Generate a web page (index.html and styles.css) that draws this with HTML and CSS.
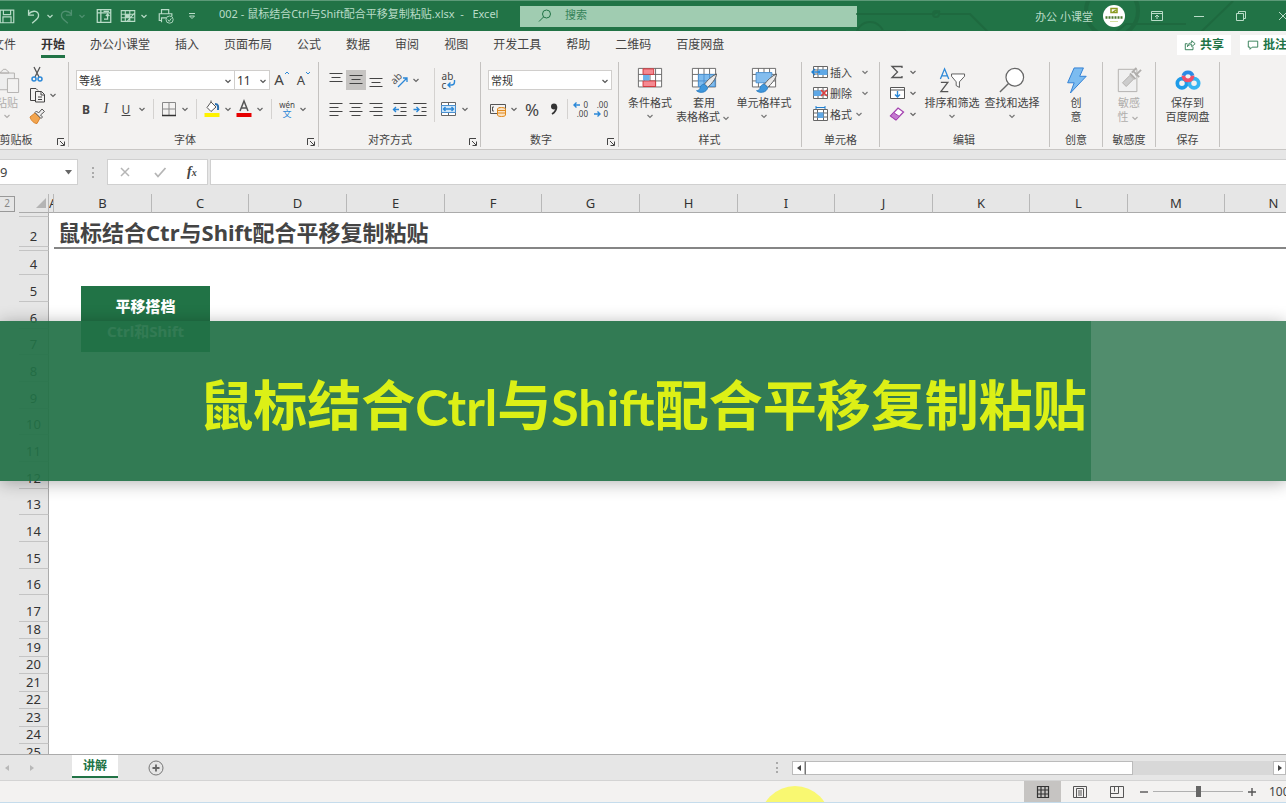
FILE: index.html
```html
<!DOCTYPE html>
<html lang="zh-CN">
<head>
    <meta charset="UTF-8">
    <meta name="viewport" content="width=device-width, initial-scale=1.0">
    <title>002 - 鼠标结合Ctrl与Shift配合平移复制粘贴.xlsx - Excel</title>
    <link rel="stylesheet" href="styles.css">
</head>
<body>
    <!-- icon sprite -->
    <svg class="sprite" aria-hidden="true">
        <symbol id="chev" viewBox="0 0 12 12"><path d="M3.500 5l2.500 2.500L8.500 5" fill="none" stroke="currentColor" stroke-width="1.200"/></symbol>
        <symbol id="launch" viewBox="0 0 10 10"><path d="M1.500 8V1.500H8M4 4l4 4M8.500 4.500v4h-4" fill="none" stroke="currentColor"/></symbol>
        <symbol id="al" viewBox="0 0 20 20"><path d="M3.500 4.500h13M3.500 8.500h9M3.500 12.500h13M3.500 16.500h9" stroke="currentColor"/></symbol>
        <symbol id="ac" viewBox="0 0 20 20"><path d="M3.500 4.500h13M5.500 8.500h9M3.500 12.500h13M5.500 16.500h9" stroke="currentColor"/></symbol>
        <symbol id="ar" viewBox="0 0 20 20"><path d="M3.500 4.500h13M7.500 8.500h9M3.500 12.500h13M7.500 16.500h9" stroke="currentColor"/></symbol>
        <symbol id="grid-ic" viewBox="0 0 28 26"><path d="M1.500 1.500h25v20h-25zM1.500 8h25M1.500 15h25M8 1.500v20M14 1.500v20M20 1.500v20" fill="#fff" stroke="#666"/></symbol>
        <symbol id="brush" viewBox="0 0 28 28"><path d="M27.500 7.500c-5 2-10 7-13 11l3.500 3.500c4-4 9-9 9.500-14.500z" fill="#e8e8e8" stroke="#555"/><path d="M14.500 18.500c-3 0-4.500 2-5 5-1 1.500-2 2-3.500 2 3 3 11 2.500 12-3.500z" fill="#3f97dc" stroke="#2b7cc0"/></symbol>
    </svg>

    <header class="titlebar">
        <svg class="circuit" viewBox="0 0 430 31" fill="none" stroke="#1d663d" stroke-width="2" aria-hidden="true">
            <path d="M0 13h78l6-3M84 13h30l20 20M260 31l10-8h60M345 31l32-31M0 30h50"/>
            <circle cx="14" cy="35" r="14"/><circle cx="256" cy="10" r="26" stroke-width="4"/><circle cx="80" cy="13" r="3"/>
        </svg>
        <div class="quick">
            <button class="tool" aria-label="保存"><svg viewBox="0 0 20 20"><path d="M2.500 3.500h15v14h-15zM6 3.500v5h8v-5M5.500 17v-6h9v6" fill="none" stroke="currentColor" stroke-width="1.300"/></svg></button>
            <button class="tool undo" aria-label="撤消"><svg viewBox="0 0 20 20"><path d="M4 3v6h6M4 8c4-5 12-4 11 2 0 3-4 5-7 8" fill="none" stroke="currentColor" stroke-width="1.500"/></svg></button>
            <button class="drop" aria-label="撤消选项"><svg><use href="#chev"/></svg></button>
            <button class="tool redo dim" aria-label="恢复"><svg viewBox="0 0 20 20"><path d="M16 3v6h-6M16 8C12 3 4 4 5 10c0 3 4 5 7 8" fill="none" stroke="currentColor" stroke-width="1.500"/></svg></button>
            <button class="drop dim" aria-label="恢复选项"><svg><use href="#chev"/></svg></button>
            <button class="tool pivot" aria-label="数据透视表"><svg viewBox="0 0 20 20"><path d="M2.500 3h15v14h-15zM2.500 6.500h15M6.500 3v14M10 13.500h4v-5M12 10l2-2 2 2M9.500 4.800h6" fill="none" stroke="currentColor" stroke-width="1.400"/></svg></button>
            <button class="tool" aria-label="样式"><svg viewBox="0 0 20 20"><path d="M2.500 4h15v12h-15zM2.500 8h14M2.500 12h14M7 4v12M12 4v12M18 6l-9 10" fill="none" stroke="currentColor" stroke-width="1.200"/><path d="M7 8h5v4H7z" fill="currentColor"/></svg></button>
            <button class="drop" aria-label="样式选项"><svg><use href="#chev"/></svg></button>
            <button class="tool print" aria-label="打印预览"><svg viewBox="0 0 20 20"><path d="M5 7V3h8v4M5 15H2.500V7.500h14V10M5 17v-5h5" fill="none" stroke="currentColor" stroke-width="1.300"/><circle cx="14" cy="14" r="4" fill="none" stroke="currentColor"/><path d="M12 14l1.500 2L16 12.500" fill="none" stroke="currentColor"/></svg></button>
            <button class="drop more" aria-label="自定义"><svg viewBox="0 0 12 12"><path d="M3 3.500h6M3.500 6L6 8.500 8.500 6z" fill="none" stroke="currentColor"/></svg></button>
        </div>
        <div class="doc-name">002 - 鼠标结合Ctrl与Shift配合平移复制粘贴.xlsx &nbsp;- &nbsp;&nbsp;Excel</div>
        <label class="search">
            <svg viewBox="0 0 16 16"><circle cx="9.500" cy="6" r="4" fill="none" stroke="currentColor"/><path d="M6.500 9L2 13.500" stroke="currentColor"/></svg>
            <input type="text" placeholder="搜索" aria-label="搜索">
        </label>
        <div class="account">
            <span>办公 小课堂</span>
            <svg class="avatar" viewBox="0 0 22 22"><circle cx="11" cy="11" r="11" fill="#fff"/><path d="M8 3.500h6v4H8zM10 7l3-2" fill="none" stroke="#8a9a20" stroke-width="1.500"/><path d="M2.500 12.500h17" stroke="#4c7a2c" stroke-width="2.500" stroke-dasharray="2 1"/><path d="M7 16.500h8" stroke="#d5dfa0"/></svg>
        </div>
        <div class="window-buttons">
            <button aria-label="功能区显示选项"><svg viewBox="0 0 14 14"><path d="M1.500 2.500h11v9h-11zM1.500 4.500h11M7 10V6M5 8l2-2 2 2" fill="none" stroke="currentColor"/></svg></button>
            <button aria-label="最小化"><svg viewBox="0 0 14 14"><path d="M2 7.500h10" stroke="currentColor"/></svg></button>
            <button aria-label="还原"><svg viewBox="0 0 14 14"><path d="M2.500 4.500h7v7h-7zM4.500 4.500v-2h7v7h-2" fill="none" stroke="currentColor"/></svg></button>
            <button aria-label="关闭"><svg viewBox="0 0 14 14"><path d="M3 3l8 8M11 3l-8 8" stroke="currentColor"/></svg></button>
        </div>
    </header>

    <nav class="tabs">
        <a href="#">文件</a>
        <a href="#" class="active">开始</a>
        <a href="#">办公小课堂</a>
        <a href="#">插入</a>
        <a href="#">页面布局</a>
        <a href="#">公式</a>
        <a href="#">数据</a>
        <a href="#">审阅</a>
        <a href="#">视图</a>
        <a href="#">开发工具</a>
        <a href="#">帮助</a>
        <a href="#">二维码</a>
        <a href="#">百度网盘</a>
        <div class="share">
            <button><svg viewBox="0 0 14 14"><path d="M4 5.500H1.500v7h9V9M4 9c0-3 2-4.500 5-4.500V2l4 3.500L9 9V6.500C7 6.500 5 7 4 9z" fill="none" stroke="currentColor"/></svg>共享</button>
            <button class="comment"><svg viewBox="0 0 14 14"><path d="M1.500 2.500h11v7H6L3.500 12V9.500h-2z" fill="none" stroke="currentColor"/></svg>批注</button>
        </div>
    </nav>

    <section class="ribbon">
        <div class="group clipboard">
            <div class="body">
                <button class="big dim paste"><svg viewBox="0 0 28 28"><path d="M2 6.500h20v18H2zM7 6.500c0-3 2-1 3-4h3c1 3 3 1 3 4z" fill="#eee" stroke="currentColor"/><path d="M14.500 12.500h12v15h-12z" fill="#f3f2f1" stroke="currentColor"/></svg><span>粘贴</span><svg class="chev"><use href="#chev"/></svg></button>
                <div class="stack">
                    <button class="tool" aria-label="剪切"><svg viewBox="0 0 20 20"><path d="M7 3l5 10M13 3L8 13" stroke="#555" stroke-width="1.300"/><circle cx="7" cy="15" r="2" fill="none" stroke="#2b88d8" stroke-width="1.500"/><circle cx="13" cy="15" r="2" fill="none" stroke="#2b88d8" stroke-width="1.500"/></svg></button>
                    <div class="row"><button class="tool" aria-label="复制"><svg viewBox="0 0 20 20"><path d="M8 15.500H3.500v-12H9l2 2M8.500 6.500h6l3 3v7.500h-9zM14 6.500v3.500h3.500M11 12h4M11 14.500h4" fill="none" stroke="currentColor"/></svg></button><button class="drop" aria-label="复制选项"><svg><use href="#chev"/></svg></button></div>
                    <button class="tool" aria-label="格式刷"><svg viewBox="0 0 20 20"><path d="M3 11l5-4 5 5-3 5.500c-3 0-6-3-7-6.500z" fill="#f2a54e" stroke="#d9822b"/><path d="M8 6.500l6 6 1.500-1.500-2-2 4-3.500-2.500-2.500-3.500 4-2-2z" fill="#eee" stroke="#555"/></svg></button>
                </div>
            </div>
            <div class="caption">剪贴板</div>
            <button class="launcher" aria-label="剪贴板设置"><svg><use href="#launch"/></svg></button>
        </div>

        <div class="group font">
            <div class="body column">
                <div class="row">
                    <div class="combo family"><select aria-label="字体"><option>等线</option></select><svg><use href="#chev"/></svg></div>
                    <div class="combo size"><select aria-label="字号"><option>11</option></select><svg><use href="#chev"/></svg></div>
                    <button class="tool grow" aria-label="增大字号">A<svg viewBox="0 0 6 6"><path d="M1 4l2-2 2 2" fill="none" stroke="#2b88d8"/></svg></button>
                    <button class="tool grow small" aria-label="减小字号">A<svg viewBox="0 0 6 6"><path d="M1 2l2 2 2-2" fill="none" stroke="#2b88d8"/></svg></button>
                </div>
                <div class="row">
                    <button class="tool bold">B</button>
                    <button class="tool italic">I</button>
                    <button class="tool underline">U</button>
                    <button class="drop" aria-label="下划线选项"><svg><use href="#chev"/></svg></button>
                    <i class="sep"></i>
                    <button class="tool" aria-label="边框"><svg viewBox="0 0 20 20"><path d="M3.500 3.500h13v13M3.500 3.500v13M10 3.500v13M3.500 10h13" fill="none" stroke="#888"/><path d="M3 16.500h14" stroke="#333" stroke-width="1.500"/></svg></button>
                    <button class="drop" aria-label="边框选项"><svg><use href="#chev"/></svg></button>
                    <i class="sep"></i>
                    <button class="tool" aria-label="填充颜色"><svg viewBox="0 0 20 20"><path d="M9 3l5 5-5 4.500L5 8.500zM9 3V1.500" fill="#fff" stroke="#555"/><path d="M13 5c3 0 3.500 2 3 6" fill="none" stroke="#2b6fae" stroke-width="2"/><path d="M2.500 14h15v4h-15z" fill="#fff200"/></svg></button>
                    <button class="drop" aria-label="填充选项"><svg><use href="#chev"/></svg></button>
                    <button class="tool" aria-label="字体颜色"><svg viewBox="0 0 20 20"><path d="M6 12l4-10 4 10M7.500 9h5" fill="none" stroke="#555" stroke-width="1.500"/><path d="M2.500 14h15v4h-15z" fill="#e60000"/></svg></button>
                    <button class="drop" aria-label="字体颜色选项"><svg><use href="#chev"/></svg></button>
                    <i class="sep"></i>
                    <button class="tool pinyin"><span>wén</span><b>文</b></button>
                    <button class="drop" aria-label="拼音选项"><svg><use href="#chev"/></svg></button>
                </div>
            </div>
            <div class="caption">字体</div>
            <button class="launcher" aria-label="字体设置"><svg><use href="#launch"/></svg></button>
        </div>

        <div class="group align">
            <div class="body">
                <div class="column">
                    <div class="row">
                        <button class="tool" aria-label="顶端对齐"><svg viewBox="0 0 20 20"><path d="M3.500 3.500h13M5.500 7.500h9M3.500 11.500h13" stroke="currentColor"/></svg></button>
                        <button class="tool pressed" aria-label="垂直居中"><svg viewBox="0 0 20 20"><path d="M3.500 5.500h13M5.500 9.500h9M3.500 13.500h13" stroke="currentColor"/></svg></button>
                        <button class="tool" aria-label="底端对齐"><svg viewBox="0 0 20 20"><path d="M3.500 8.500h13M5.500 12.500h9M3.500 16.500h13" stroke="currentColor"/></svg></button>
                        <i class="gap"></i>
                        <button class="tool" aria-label="方向"><svg viewBox="0 0 20 20"><text x="2" y="11" font-size="10" transform="rotate(-45 8 10)" fill="#555">ab</text><path d="M8 17l9-9M13 8h4v4" fill="none" stroke="#2b88d8" stroke-width="1.300"/></svg></button>
                        <button class="drop" aria-label="方向选项"><svg><use href="#chev"/></svg></button>
                    </div>
                    <div class="row">
                        <button class="tool" aria-label="左对齐"><svg><use href="#al"/></svg></button>
                        <button class="tool" aria-label="居中"><svg><use href="#ac"/></svg></button>
                        <button class="tool" aria-label="右对齐"><svg><use href="#ar"/></svg></button>
                        <i class="gap"></i>
                        <button class="tool" aria-label="减少缩进"><svg viewBox="0 0 20 20"><path d="M3.500 4.500h13M10.500 8.500h6M10.500 12.500h6M3.500 16.500h13" stroke="currentColor"/><path d="M9 10.500H3.500M6 8l-2.500 2.500L6 13" fill="none" stroke="#2b88d8" stroke-width="1.400"/></svg></button>
                        <button class="tool" aria-label="增加缩进"><svg viewBox="0 0 20 20"><path d="M3.500 4.500h13M11.500 8.500h5M11.500 12.500h5M3.500 16.500h13" stroke="currentColor"/><path d="M3.500 10.500H9M6.500 8L9 10.500 6.500 13" fill="none" stroke="#2b88d8" stroke-width="1.400"/></svg></button>
                    </div>
                </div>
                <i class="sep tall"></i>
                <div class="column">
                    <button class="tool wrap" aria-label="自动换行"><span>ab<br>c</span><svg viewBox="0 0 10 10"><path d="M8.500 0v2c0 2-1 3-3 3H2M4.500 2.500L2 5l2.500 2.500" fill="none" stroke="#2b88d8" stroke-width="1.400"/></svg></button>
                    <div class="row">
                        <button class="tool" aria-label="合并后居中"><svg viewBox="0 0 20 20"><path d="M2.500 3.500h14v13h-14zM9.500 3.500v13" fill="#fff" stroke="#666"/><path d="M2.500 6.500h14v7h-14z" fill="#cfe6f8" stroke="#4a90d0"/><path d="M4.500 10h10M6.500 8l-2 2 2 2M12.500 8l2 2-2 2" fill="none" stroke="#2b88d8" stroke-width="1.400"/></svg></button>
                        <button class="drop" aria-label="合并选项"><svg><use href="#chev"/></svg></button>
                    </div>
                </div>
            </div>
            <div class="caption">对齐方式</div>
            <button class="launcher" aria-label="对齐设置"><svg><use href="#launch"/></svg></button>
        </div>

        <div class="group number">
            <div class="body column">
                <div class="combo format"><select aria-label="数字格式"><option>常规</option></select><svg><use href="#chev"/></svg></div>
                <div class="row">
                    <button class="tool" aria-label="会计数字格式"><svg viewBox="0 0 20 20"><path d="M2.500 5.500h15v9h-15z" fill="#f3f2f1" stroke="#555"/><path d="M6 8H4.500v4H6M12 8l-2 2 2 2" fill="none" stroke="#555"/><path d="M9.500 10c0-2 8-2 8 0v6c0 2-8 2-8 0zM9.500 11.500h8M9.500 14h8" fill="#fbe3c4" stroke="#e08a1e"/></svg></button>
                    <button class="drop" aria-label="会计选项"><svg><use href="#chev"/></svg></button>
                    <button class="tool percent">%</button>
                    <button class="tool" aria-label="千位分隔"><svg viewBox="0 0 20 20"><circle cx="10" cy="7.500" r="3" fill="#333"/><path d="M12.500 7.500c0 4-2 6-4.500 7.500" fill="none" stroke="#333" stroke-width="1.800"/></svg></button>
                    <i class="sep tight"></i>
                    <button class="tool decimal" aria-label="增加小数位数"><span><svg viewBox="0 0 8 8"><path d="M7 4H1M3.500 1.500L1 4l2.500 2.500" fill="none" stroke="#2b88d8" stroke-width="1.400"/></svg>0</span><span>.00</span></button>
                    <button class="tool decimal" aria-label="减少小数位数"><span>.00</span><span><svg viewBox="0 0 8 8"><path d="M1 4h6M4.500 1.500L7 4 4.500 6.500" fill="none" stroke="#2b88d8" stroke-width="1.400"/></svg>0</span></button>
                </div>
            </div>
            <div class="caption">数字</div>
            <button class="launcher" aria-label="数字设置"><svg><use href="#launch"/></svg></button>
        </div>

        <div class="group styles">
            <div class="body">
                <button class="big"><svg viewBox="0 0 28 28"><use href="#grid-ic" width="28" height="26"/><path d="M6.500 2H18v6H6.500zM6.500 15H20v6H6.500z" fill="#f58a92" stroke="#d13438"/><path d="M6.500 8.500h7v6h-7z" fill="#6cb2ea"/></svg><span>条件格式</span><svg class="chev"><use href="#chev"/></svg></button>
                <button class="big table-style"><svg viewBox="0 0 28 28"><use href="#grid-ic" width="28" height="26"/><path d="M8 8h18v13H8zM14 8v13M20 8v13M8 15h18" fill="#7dbbee" stroke="#4a90d0"/><use href="#brush" width="28" height="28"/></svg><span>套用<br>表格格式<svg class="chev"><use href="#chev"/></svg></span></button>
                <button class="big"><svg viewBox="0 0 28 28"><use href="#grid-ic" width="28" height="26"/><path d="M5.500 6h17v11h-17z" fill="#83bdee" stroke="#4a90d0"/><use href="#brush" width="28" height="28"/></svg><span>单元格样式</span><svg class="chev"><use href="#chev"/></svg></button>
            </div>
            <div class="caption">样式</div>
        </div>

        <div class="group cells">
            <div class="body stack">
                <button class="line"><svg viewBox="0 0 18 16"><path d="M2.500 2.500h14v11h-14zM2.500 6h14M2.500 10h14M7 2.500v11M12 2.500v11" fill="#fff" stroke="#666"/><path d="M7 5.500h9.500V11H7z" fill="#5fa8e6"/><path d="M9 8H1M4 5L1 8l3 3" fill="none" stroke="#1f7fd0" stroke-width="1.400"/></svg>插入<svg class="chev"><use href="#chev"/></svg></button>
                <button class="line"><svg viewBox="0 0 18 16"><path d="M2.500 2.500h14v11h-14zM2.500 6h14M2.500 10h14M7 2.500v11M12 2.500v11" fill="#fff" stroke="#666"/><path d="M2.500 5.500h8V11h-8z" fill="#5fa8e6"/><path d="M10 5l6 6M16 5l-6 6" stroke="#e03a3e" stroke-width="1.500"/></svg>删除<svg class="chev"><use href="#chev"/></svg></button>
                <button class="line last"><svg viewBox="0 0 18 16"><path d="M2.500 3.500h14v11h-14zM2.500 7h14M2.500 11h14M6.500 3.500v11M12.500 3.500v11" fill="#fff" stroke="#666"/><path d="M6.500 6.500h6V12h-6z" fill="#5fa8e6"/><path d="M5 1.500h9M5 0v3M14 0v3" stroke="#1f7fd0"/></svg>格式<svg class="chev"><use href="#chev"/></svg></button>
            </div>
            <div class="caption">单元格</div>
        </div>

        <div class="group edit">
            <div class="body">
                <div class="stack">
                    <div class="row"><button class="tool" aria-label="自动求和"><svg viewBox="0 0 20 20"><path d="M15 6V4.500H5l5.500 5.500L5 15.500h10V14" fill="none" stroke="#555" stroke-width="1.300"/></svg></button><button class="drop" aria-label="求和选项"><svg><use href="#chev"/></svg></button></div>
                    <div class="row"><button class="tool" aria-label="填充"><svg viewBox="0 0 20 20"><path d="M3.500 4.500h14v11h-14zM3.500 7h14" fill="#fff" stroke="#555"/><path d="M10.500 8v6M8 11.500l2.500 2.500 2.500-2.500" fill="none" stroke="#2b88d8" stroke-width="1.400"/></svg></button><button class="drop" aria-label="填充选项"><svg><use href="#chev"/></svg></button></div>
                    <div class="row"><button class="tool" aria-label="清除"><svg viewBox="0 0 20 20"><path d="M11 4l5.500 4L9 16l-5.500-4z" fill="#fff" stroke="#a443b0" stroke-width="1.300"/><path d="M6.500 8.500l6 4L9 16l-5.500-4z" fill="#c47ad0" stroke="#a443b0"/></svg></button><button class="drop" aria-label="清除选项"><svg><use href="#chev"/></svg></button></div>
                </div>
                <button class="big"><svg viewBox="0 0 28 28"><path d="M1.500 13L6 2l4.500 11M3 9.500h6" fill="none" stroke="#2b88d8" stroke-width="1.400"/><path d="M2 16.500h7.500L2 26.500h8" fill="none" stroke="#555" stroke-width="1.400"/><path d="M13.500 7.500h14V10L22 16v6l-3.500-2v-4l-5-6z" fill="#fff" stroke="#555"/></svg><span>排序和筛选</span><svg class="chev"><use href="#chev"/></svg></button>
                <button class="big find"><svg viewBox="0 0 28 28"><circle cx="17" cy="11" r="9.500" fill="#fff" stroke="#666" stroke-width="1.300"/><path d="M10 18L1 27" stroke="#666" stroke-width="1.500"/></svg><span>查找和选择</span><svg class="chev"><use href="#chev"/></svg></button>
            </div>
            <div class="caption">编辑</div>
        </div>

        <div class="group narrow idea">
            <div class="body">
                <button class="big"><svg viewBox="0 0 28 28"><path d="M12 1h10l-4 9h7L8 28l4-11H5z" fill="#7cbcf0" stroke="#2b7cd3"/></svg><span>创<br>意</span></button>
            </div>
            <div class="caption">创意</div>
        </div>

        <div class="group narrow">
            <div class="body">
                <button class="big dim"><svg viewBox="0 0 28 28"><path d="M2.500 2.500h20v24h-20z" fill="#f0f0f0" stroke="currentColor"/><path d="M7 17l8-8 4 4-8 8z" fill="#ccc" stroke="currentColor"/><path d="M17 6l5-5M21 9l6-6M18 4l7 7M15 7l6 6" stroke="currentColor" stroke-width="2"/></svg><span>敏感<br>性<svg class="chev"><use href="#chev"/></svg></span></button>
            </div>
            <div class="caption">敏感度</div>
        </div>

        <div class="group save">
            <div class="body">
                <button class="big"><svg viewBox="0 0 28 28" fill="none" stroke-width="4"><circle cx="7.500" cy="17.500" r="5" stroke="#1e9be8"/><circle cx="20.500" cy="17.500" r="5" stroke="#35b4f2"/><path d="M9 9.500a5.200 5.200 0 0 1 10 0" stroke="#2a8be6"/><path d="M9 9.500a5 5 0 1 0 10 0" stroke="#f0506a"/></svg><span>保存到<br>百度网盘</span></button>
            </div>
            <div class="caption">保存</div>
        </div>
    </section>

    <section class="formula">
        <div class="name-box"><input type="text" value="9" aria-label="名称框"><svg viewBox="0 0 10 10"><path d="M2 3h7L5.500 7.500z" fill="#666"/></svg></div>
        <span class="dots"></span>
        <div class="formula-buttons">
            <button aria-label="取消"><svg viewBox="0 0 14 14"><path d="M3 3l8 8M11 3l-8 8" stroke="#b5b5b5" stroke-width="1.500"/></svg></button>
            <button aria-label="输入"><svg viewBox="0 0 14 14"><path d="M2 8l3 3.500L12.500 3" fill="none" stroke="#b5b5b5" stroke-width="1.800"/></svg></button>
            <button class="fx">f<sub>x</sub></button>
        </div>
        <input class="formula-input" type="text" aria-label="编辑栏">
    </section>

    <main class="sheet">
        <table>
            <colgroup>
                <col class="outline"><col class="nums"><col class="a">
                <col class="w"><col><col class="w"><col class="w"><col><col class="w">
                <col class="w"><col><col class="w"><col><col class="w"><col><col class="w">
            </colgroup>
            <thead>
                <tr>
                    <td><button class="level">2</button></td>
                    <th class="corner"><svg viewBox="0 0 12 12"><path d="M11 1v10H1z" fill="#b4b4b4"/></svg></th>
                    <th class="col-a">A</th><th>B</th><th>C</th><th>D</th><th>E</th><th>F</th><th>G</th><th>H</th><th>I</th><th>J</th><th>K</th><th>L</th><th>M</th><th>N</th>
                </tr>
            </thead>
            <tbody>
                <tr class="thin"><td></td><th></th><td></td><td colspan="13"></td></tr>
                <tr class="heading"><td></td><th>2</th><td></td><td colspan="13">鼠标结合Ctr与Shift配合平移复制粘贴</td></tr>
                <tr class="thin rule"><td></td><th></th><td></td><td colspan="13"></td></tr>
                <tr class="r4"><td></td><th>4</th><td colspan="14"></td></tr>
                <tr><td></td><th>5</th><td colspan="14"></td></tr>
                <tr><td></td><th>6</th><td colspan="14"></td></tr>
                <tr class="less"><td></td><th>7</th><td colspan="14"></td></tr>
                <tr><td></td><th>8</th><td colspan="14"></td></tr>
                <tr><td></td><th>9</th><td colspan="14"></td></tr>
                <tr class="less"><td></td><th>10</th><td colspan="14"></td></tr>
                <tr><td></td><th>11</th><td colspan="14"></td></tr>
                <tr><td></td><th>12</th><td colspan="14"></td></tr>
                <tr class="less"><td></td><th>13</th><td colspan="14"></td></tr>
                <tr><td></td><th>14</th><td colspan="14"></td></tr>
                <tr><td></td><th>15</th><td colspan="14"></td></tr>
                <tr class="less"><td></td><th>16</th><td colspan="14"></td></tr>
                <tr><td></td><th>17</th><td colspan="14"></td></tr>
                <tr class="low"><td></td><th>18</th><td colspan="14"></td></tr>
                <tr class="low"><td></td><th>19</th><td colspan="14"></td></tr>
                <tr class="low"><td></td><th>20</th><td colspan="14"></td></tr>
                <tr class="low"><td></td><th>21</th><td colspan="14"></td></tr>
                <tr class="low"><td></td><th>22</th><td colspan="14"></td></tr>
                <tr class="low"><td></td><th>23</th><td colspan="14"></td></tr>
                <tr class="low"><td></td><th>24</th><td colspan="14"></td></tr>
                <tr class="low"><td></td><th>25</th><td colspan="14"></td></tr>
            </tbody>
        </table>
        <!-- shape placed on the sheet -->
        <div class="shape"><strong>平移搭档</strong><span>Ctrl和Shift</span></div>
        <div class="banner"><div class="banner-fill"></div><h1>鼠标结合<span>Ctrl</span>与<span>Shift</span>配合平移复制粘贴</h1></div>
    </main>

    <div class="sheet-bar">
        <div class="sheet-nav">
            <button aria-label="上一个"><svg viewBox="0 0 8 8"><path d="M6 1v6L2 4z" fill="#b8b8b8"/></svg></button>
            <button aria-label="下一个"><svg viewBox="0 0 8 8"><path d="M2 1v6l4-3z" fill="#b8b8b8"/></svg></button>
        </div>
        <a href="#" class="sheet-tab">讲解</a>
        <button class="add" aria-label="新工作表"><svg viewBox="0 0 16 16"><circle cx="8" cy="8" r="7" fill="none" stroke="#777"/><path d="M8 4.500v7M4.500 8h7" stroke="#666" stroke-width="1.800"/></svg></button>
        <span class="dots"></span>
        <div class="scroll">
            <button aria-label="向左"><svg viewBox="0 0 8 8"><path d="M6 1v6L2 4z" fill="#444"/></svg></button>
            <div class="track"><div class="thumb"></div></div>
            <button aria-label="向右"><svg viewBox="0 0 8 8"><path d="M2 1v6l4-3z" fill="#444"/></svg></button>
        </div>
    </div>

    <footer class="status">
        <div class="pointer"></div>
        <div class="views">
            <button class="on" aria-label="普通"><svg viewBox="0 0 14 14"><path d="M1.500 1.500h11v11h-11zM1.500 5h11M1.500 9h11M5 1.500v11M9 1.500v11" fill="none" stroke="#333" stroke-width="1.200"/></svg></button>
            <button aria-label="页面布局"><svg viewBox="0 0 14 14"><path d="M.5 1.500h13v11H.5zM3.500 3.500h7v9h-7zM5 6h4M5 8h4M5 10h4" fill="none" stroke="#555"/></svg></button>
            <button aria-label="分页预览"><svg viewBox="0 0 14 14"><path d="M.5 1.500h13v11H.5zM.5 8.500h8v-7M4.500 1.500v5" fill="none" stroke="#555"/></svg></button>
        </div>
        <button class="zoom" aria-label="缩小"><svg viewBox="0 0 10 10"><path d="M1 5h8" stroke="#555" stroke-width="1.400"/></svg></button>
        <input type="range" min="0" max="100" value="51" aria-label="缩放">
        <button class="zoom" aria-label="放大"><svg viewBox="0 0 10 10"><path d="M1 5h8M5 1v8" stroke="#555" stroke-width="1.400"/></svg></button>
        <span class="percent-text">100%</span>
    </footer>
</body>
</html>
```

FILE: styles.css
```css
* {
    box-sizing: border-box;
}
body {
    margin: 0;
    height: 100vh;
    display: flex;
    flex-direction: column;
    overflow: hidden;
    background: #e6e6e6;
    color: #444;
    font: 11px/13px "Noto Sans", "Noto Sans CJK SC", sans-serif;
}
button, input, select {
    font: inherit;
    color: inherit;
    border: 0;
    padding: 0;
    margin: 0;
    background: none;
    border-radius: 0;
}
button {
    display: flex;
    align-items: center;
    justify-content: center;
    flex: none;
}
a {
    color: inherit;
    text-decoration: none;
}
svg {
    display: block;
    flex: none;
}
.sprite {
    position: absolute;
    width: 0;
    height: 0;
}

/* title bar */
.titlebar {
    position: relative;
    display: flex;
    align-items: center;
    flex: none;
    height: 31px;
    background: #217346;
    border-top: 1px solid #5c9a78;
    color: #b9dcc8;
    overflow: hidden;
}
.circuit {
    position: absolute;
    right: 0;
    top: 0;
    width: 430px;
    height: 31px;
    opacity: 0.7;
}
.quick {
    display: flex;
    align-items: center;
    width: 219px;
    margin-left: -3px;
    flex: none;
}
.quick .tool svg {
    width: 18px;
    height: 18px;
}
.quick .drop {
    color: #b9dcc8;
}
.undo {
    margin-left: 7px;
}
.pivot {
    margin-left: 6px;
    margin-right: 4px;
}
.print {
    margin-left: 6px;
}
.more {
    margin-left: 10px;
}
.quick .dim {
    color: #4f9070;
}
.doc-name {
    width: 304px;
    flex: none;
    white-space: nowrap;
    line-height: 20px;
    padding-left: 3px;
    padding-bottom: 4px;
}
.search {
    display: flex;
    align-items: center;
    gap: 12px;
    width: 26.2%;
    height: 21px;
    padding-left: 17px;
    background: #a0ccb1;
    color: #217346;
}
.search svg {
    width: 16px;
    height: 16px;
}
.search input {
    flex: 1;
    min-width: 0;
    height: 19px;
    padding-bottom: 4px;
    outline: 0;
}
.search input::placeholder {
    color: #35835a;
    opacity: 1;
}
.account {
    position: relative;
    display: flex;
    align-items: center;
    gap: 10px;
    margin-left: auto;
    padding-right: 11px;
}
.avatar {
    width: 22px;
    height: 22px;
}
.window-buttons {
    position: relative;
    display: flex;
    margin-right: -18px;
}
.window-buttons button {
    width: 42px;
    height: 30px;
}
.window-buttons svg {
    width: 14px;
    height: 14px;
}

/* ribbon tabs */
.tabs {
    display: flex;
    align-items: flex-start;
    gap: 25px;
    flex: none;
    height: 31px;
    padding-top: 4px;
    margin-left: -8px;
    background: #f3f2f1;
    font-size: 12px;
    line-height: 20px;
    white-space: nowrap;
}
.tabs a.active {
    font-weight: bold;
    color: #333;
    border-bottom: 3px solid #217346;
    height: 23px;
}
.share {
    display: flex;
    gap: 9px;
    margin-left: auto;
    margin-right: -8px;
}
.share button {
    gap: 4px;
    width: 54px;
    height: 20px;
    background: #fff;
    color: #217346;
    font-weight: bold;
}
.share svg {
    width: 12px;
    height: 12px;
}

/* ribbon */
.ribbon {
    display: flex;
    flex: none;
    height: 88px;
    background: #f3f2f1;
    border-bottom: 1px solid #c8c6c4;
    white-space: nowrap;
}
.group {
    position: relative;
    display: flex;
    flex-direction: column;
    flex: none;
    height: 85px;
    border-right: 1px solid #c4c2c0;
}
.body {
    display: flex;
    height: 71px;
}
.column {
    display: flex;
    flex-direction: column;
    gap: 9px;
    padding-top: 8px;
}
.row {
    display: flex;
    align-items: center;
    height: 20px;
}
.caption {
    text-align: center;
    line-height: 14px;
}
.launcher {
    position: absolute;
    right: 2px;
    bottom: 0;
    width: 10px;
    height: 10px;
}
.launcher svg {
    width: 10px;
    height: 10px;
}
.tool {
    width: 20px;
    height: 20px;
}
.tool svg {
    width: 20px;
    height: 20px;
}
.drop {
    width: 12px;
    height: 20px;
    color: #666;
}
.drop svg, .chev, .combo svg {
    width: 12px;
    height: 12px;
}
.dim {
    color: #b0aeac;
}
.pressed {
    background: #c6c4c2;
}
.sep {
    width: 1px;
    height: 20px;
    margin: 0 5px;
    background: #d4d2d0;
}
.sep.tight {
    margin: 0 3px;
}
.sep.tall {
    height: 54px;
    margin: 6px 4px 0;
}
.gap {
    width: 4px;
}
.combo {
    position: relative;
    height: 20px;
    border: 1px solid #d0cecc;
    background: #fff;
    color: #333;
}
.combo select {
    display: block;
    appearance: none;
    width: 100%;
    height: 18px;
    padding-left: 2px;
    outline: 0;
}
.combo svg {
    position: absolute;
    right: 0;
    top: 4px;
    color: #555;
    pointer-events: none;
}
.stack {
    display: flex;
    flex-direction: column;
    gap: 1px;
}
.big {
    flex-direction: column;
    justify-content: flex-start;
    padding-top: 5px;
}
.big > svg:first-child {
    width: 28px;
    height: 26px;
    margin-bottom: 3px;
}
.big span {
    line-height: 14px;
}
.big .chev, .line .chev {
    color: #777;
}
.big.dim .chev {
    color: #b0aeac;
}
.big span .chev {
    display: inline-block;
    vertical-align: middle;
}

.clipboard {
    width: 69px;
}
.clipboard .caption {
    width: 32px;
    display: flex;
    justify-content: center;
}
.paste {
    width: 24px;
    margin-left: -5px;
}
.clipboard .stack {
    margin-left: 8px;
    padding-top: 2px;
}
.font {
    width: 250px;
    padding-left: 7px;
}
.font .caption {
    padding-right: 24px;
}
.family {
    width: 159px;
}
.size {
    width: 36px;
    margin-left: -1px;
}
.size select {
    font-size: 12px;
}
.grow {
    margin-left: 2px;
    font-size: 15px;
    align-items: flex-start;
    line-height: 18px;
}
.grow.small {
    font-size: 13px;
    line-height: 20px;
}
.grow svg {
    width: 6px;
    height: 6px;
}
.bold {
    font-size: 12px;
    font-weight: bold;
}
.italic {
    font: italic 14px "Liberation Serif", serif;
}
.underline {
    font-size: 12px;
    text-decoration: underline;
}
.pinyin {
    flex-direction: column;
    font-size: 8px;
    line-height: 9px;
}
.pinyin b {
    color: #2b88d8;
    font-size: 9px;
    line-height: 10px;
    font-weight: normal;
}
.wrap {
    font-size: 10px;
    line-height: 9px;
    text-align: left;
    align-items: flex-end;
}
.wrap svg {
    width: 10px;
    height: 10px;
    margin-left: -7px;
}
.align {
    width: 162px;
    padding-left: 7px;
}
.align .caption {
    padding-right: 26px;
}
.number {
    width: 138px;
    padding-left: 7px;
}
.number .caption {
    padding-right: 24px;
}
.format {
    width: 124px;
}
.percent {
    width: 24px;
    font-size: 17px;
}
.decimal {
    flex-direction: column;
    align-items: flex-end;
    padding-right: 3px;
    font-size: 8px;
    line-height: 9px;
}
.decimal span {
    display: flex;
    align-items: center;
}
.decimal svg {
    width: 8px;
    height: 8px;
    margin-right: 2px;
}
.styles {
    width: 183px;
    padding-left: 5px;
}
.styles .caption {
    padding-right: 6px;
}
.styles .big {
    width: 52px;
}
.styles .big.table-style {
    width: 56px;
}
.styles .big:last-child {
    width: 64px;
}
.cells {
    width: 78px;
    padding-left: 9px;
}
.cells .caption {
    padding-right: 9px;
}
.line {
    height: 20px;
    justify-content: flex-start;
    gap: 1px;
}
.line > svg:first-child {
    width: 18px;
    height: 16px;
}
.line .chev {
    margin-left: 6px;
}
.line.last .chev {
    margin-left: 0;
}
.edit {
    width: 170px;
    padding-left: 7px;
}
.edit .caption {
    padding-right: 8px;
}
.edit .big {
    width: 60px;
}
.edit .stack {
    width: 35px;
}
.narrow {
    width: 53px;
}
.narrow .big, .save .big {
    width: 100%;
}
.save {
    width: 64px;
}

/* formula bar */
.formula {
    display: flex;
    align-items: center;
    flex: none;
    height: 44px;
}
.name-box {
    display: flex;
    align-items: center;
    width: 78px;
    height: 26px;
    border: 1px solid #d0d0d0;
    border-left: 0;
    background: #fff;
    font-size: 13px;
}
.name-box input {
    flex: 1;
    min-width: 0;
    height: 20px;
}
.name-box svg {
    width: 10px;
    height: 10px;
    margin-right: 4px;
}
.dots {
    width: 2px;
    height: 11px;
    border-left: 2px dotted #aaa;
}
.formula .dots {
    margin: 0 13px 0 14px;
}
.formula-buttons {
    display: flex;
    justify-content: space-around;
    width: 101px;
    height: 26px;
    border: 1px solid #d0d0d0;
    background: #fff;
}
.formula-buttons svg {
    width: 14px;
    height: 14px;
}
.fx {
    font: italic bold 14px "Liberation Serif", serif;
}
.fx sub {
    font-size: 10px;
}
.formula-input {
    flex: 1;
    min-width: 0;
    height: 26px;
    margin-left: 2px;
    border: 1px solid #d0d0d0;
    border-right: 0;
    background: #fff;
    outline: 0;
}

/* worksheet */
.sheet {
    position: relative;
    flex: 1;
    min-height: 0;
    overflow: hidden;
    border-bottom: 1px solid #ababab;
}
.sheet table {
    width: 1323px;
    table-layout: fixed;
    border-collapse: separate;
    border-spacing: 0;
    color: #333;
    font-size: 13px;
    line-height: 17px;
}
.sheet th, .sheet td {
    padding: 0;
    height: 27px;
}
col {
    width: 97px;
}
col.w {
    width: 98px;
}
col.outline {
    width: 19px;
}
col.nums {
    width: 30px;
}
col.a {
    width: 5px;
}
.sheet thead th {
    height: 19px;
    font-weight: normal;
    border-right: 1px solid #b8b8b8;
    border-bottom: 1px solid #ababab;
    overflow: hidden;
}
.sheet thead td {
    height: 19px;
}
.level {
    width: 15px;
    height: 16px;
    border: 1px solid #999;
    border-left: 0;
    font-size: 10px;
    color: #888;
}
.corner svg {
    width: 12px;
    height: 12px;
    margin-left: 16px;
}
.sheet tbody th {
    font-weight: normal;
    vertical-align: bottom;
    padding-bottom: 1px;
    border-right: 1px solid #ababab;
    border-bottom: 1px solid #c4c4c4;
}
.sheet tbody th ~ td {
    background: #fff;
}
.sheet tbody .thin > * {
    height: 4px;
    padding: 0;
    line-height: 1px;
}
.sheet tbody .heading > * {
    height: 30px;
}
.heading td:last-child {
    padding-left: 4px;
    font-size: 22px;
    line-height: 28px;
    font-weight: bold;
    white-space: nowrap;
    color: #444;
}
.rule td:last-child {
    border-top: 2px solid #858585;
}
.sheet tbody .r4 > * {
    height: 24px;
}
.sheet tbody .less > * {
    height: 26px;
}
.sheet tbody .low > * {
    height: 17px;
    line-height: 14px;
    padding: 0 0 2px;
    vertical-align: middle;
}
.sheet tbody .low:nth-child(odd) > * {
    height: 18px;
}
.shape {
    position: absolute;
    left: 81px;
    top: 92px;
    width: 129px;
    height: 66px;
    padding-top: 8px;
    display: flex;
    flex-direction: column;
    align-items: center;
    background: #217346;
    color: #fff;
    font-size: 15px;
    line-height: 25px;
    font-weight: bold;
}
.banner {
    position: absolute;
    left: 0;
    right: 0;
    top: 127px;
    height: 160px;
    padding-top: 8px;
    display: flex;
    align-items: center;
    justify-content: center;
    background: rgba(34, 110, 70, 0.79);
    box-shadow: 0 2px 16px rgba(0, 0, 0, 0.3);
}
.banner-fill {
    position: absolute;
    left: 0;
    top: 0;
    width: 84.8%;
    height: 100%;
    background: rgba(34, 113, 70, 0.65);
}
.banner h1 {
    position: relative;
    margin: 0;
    color: #dcf016;
    font: bold 54px/76px "Noto Sans CJK SC", sans-serif;
    white-space: nowrap;
}
.banner h1 span {
    font-family: Lato, sans-serif;
    font-size: 50px;
}

/* sheet tabs and scroll bar */
.sheet-bar {
    display: flex;
    align-items: center;
    flex: none;
    height: 25px;
}
.sheet-nav {
    display: flex;
    gap: 17px;
    width: 72px;
    padding-left: 3px;
}
.sheet-nav svg, .scroll svg {
    width: 8px;
    height: 8px;
}
.sheet-tab {
    align-self: flex-start;
    width: 46px;
    height: 23px;
    text-align: center;
    font-size: 12px;
    line-height: 21px;
    font-weight: bold;
    color: #217346;
    background: #fff;
    border-bottom: 2px solid #217346;
}
.add {
    margin-left: 30px;
}
.add svg {
    width: 16px;
    height: 16px;
}
.sheet-bar .dots {
    margin-left: auto;
}
.scroll {
    display: flex;
    width: 38.4%;
    height: 14px;
    margin-left: 14px;
}
.scroll button {
    width: 13px;
    background: #fff;
    border: 1px solid #bbb;
}
.track {
    flex: 1;
    background: #d8d8d8;
}
.thumb {
    width: 70%;
    height: 14px;
    background: #fff;
    border: 1px solid #bbb;
    border-left-color: #777;
}

/* status bar */
.status {
    position: relative;
    display: flex;
    align-items: center;
    flex: none;
    height: 23px;
    overflow: hidden;
    background: #f3f2f1;
    border-top: 1px solid #d4d4d4;
    border-bottom: 1px solid #c5dcec;
}
.pointer {
    position: absolute;
    left: 760px;
    top: 5px;
    width: 70px;
    height: 70px;
    border-radius: 50%;
    background: #f9f871;
}
.views {
    display: flex;
    margin-left: auto;
}
.views button {
    width: 37px;
    height: 21px;
}
.views .on {
    background: #c6c4c2;
}
.views svg {
    width: 14px;
    height: 14px;
}
.zoom {
    width: 18px;
}
.zoom svg {
    width: 10px;
    height: 10px;
}
.status input[type="range"] {
    appearance: none;
    width: 90px;
    height: 12px;
    background: linear-gradient(#b0b0b0, #b0b0b0) center / 100% 1px no-repeat;
}
.status input[type="range"]::-webkit-slider-thumb {
    appearance: none;
    width: 5px;
    height: 11px;
    background: #666;
}
.percent-text {
    width: 25px;
    padding-left: 8px;
    font-size: 12px;
    overflow: hidden;
}
```
